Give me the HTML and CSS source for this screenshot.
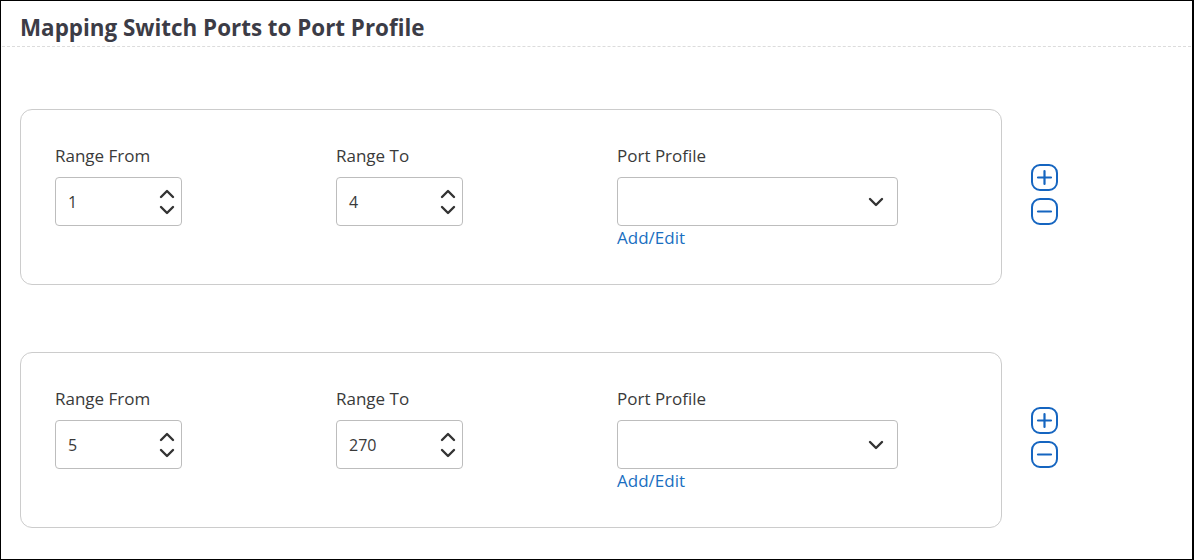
FILE: index.html
```html
<!DOCTYPE html>
<html>
<head>
<meta charset="utf-8">
<link rel="stylesheet" href="styles.css">
</head>
<body>
<div class="frame">
  <div class="header"><h1 class="title">Mapping Switch Ports to Port Profile</h1></div>
  <div class="rows">
    <div class="row">
      <div class="card">
        <div class="field">
          <div class="label">Range From</div>
          <div class="num"><span class="val">1</span>
            <svg class="spin" width="16" height="30" viewBox="0 0 16 30"><path d="M2 10 L8 4 L14 10" /><path d="M2 20 L8 26 L14 20" /></svg>
          </div>
        </div>
        <div class="field">
          <div class="label">Range To</div>
          <div class="num"><span class="val">4</span>
            <svg class="spin" width="16" height="30" viewBox="0 0 16 30"><path d="M2 10 L8 4 L14 10" /><path d="M2 20 L8 26 L14 20" /></svg>
          </div>
        </div>
        <div class="field">
          <div class="label">Port Profile</div>
          <div class="select">
            <svg class="chev" width="16" height="10" viewBox="0 0 16 10"><path d="M2 2 L8 8 L14 2" /></svg>
          </div>
          <a class="link">Add/Edit</a>
        </div>
      </div>
      <div class="actions">
        <svg class="btn" width="27" height="27" viewBox="0 0 27 27"><rect x="1" y="1" width="25" height="25" rx="8"/><path d="M13.5 7 V20 M7 13.5 H20"/></svg>
        <svg class="btn" width="27" height="27" viewBox="0 0 27 27"><rect x="1" y="1" width="25" height="25" rx="8"/><path d="M7 13.5 H20"/></svg>
      </div>
    </div>
    <div class="row">
      <div class="card">
        <div class="field">
          <div class="label">Range From</div>
          <div class="num"><span class="val">5</span>
            <svg class="spin" width="16" height="30" viewBox="0 0 16 30"><path d="M2 10 L8 4 L14 10" /><path d="M2 20 L8 26 L14 20" /></svg>
          </div>
        </div>
        <div class="field">
          <div class="label">Range To</div>
          <div class="num"><span class="val">270</span>
            <svg class="spin" width="16" height="30" viewBox="0 0 16 30"><path d="M2 10 L8 4 L14 10" /><path d="M2 20 L8 26 L14 20" /></svg>
          </div>
        </div>
        <div class="field">
          <div class="label">Port Profile</div>
          <div class="select">
            <svg class="chev" width="16" height="10" viewBox="0 0 16 10"><path d="M2 2 L8 8 L14 2" /></svg>
          </div>
          <a class="link">Add/Edit</a>
        </div>
      </div>
      <div class="actions">
        <svg class="btn" width="27" height="27" viewBox="0 0 27 27"><rect x="1" y="1" width="25" height="25" rx="8"/><path d="M13.5 7 V20 M7 13.5 H20"/></svg>
        <svg class="btn" width="27" height="27" viewBox="0 0 27 27"><rect x="1" y="1" width="25" height="25" rx="8"/><path d="M7 13.5 H20"/></svg>
      </div>
    </div>
  </div>
</div>
</body>
</html>
```

FILE: styles.css
```css
* { box-sizing: border-box; }
html, body { margin: 0; padding: 0; background: #fff; }
body { font-family: "Open Sans", "Noto Sans", sans-serif; color: #333; }
.frame {
  width: 1194px;
  height: 560px;
  border: 1px solid #000;
  border-right-width: 2px;
  overflow: hidden;
}
.header {
  padding: 12px 0 0 18px;
  height: 46px;
  border-bottom: 1px dashed #dcdcdc;
  margin: 0 1px;
}
.title {
  margin: 0;
  font-size: 22.4px;
  line-height: 30px;
  font-weight: 700;
  color: #3c3c46;
}
.rows {
  padding: 62px 0 0 19px;
  display: flex;
  flex-direction: column;
  gap: 67px;
}
.row {
  display: flex;
  align-items: center;
  gap: 30px;
}
.card {
  width: 982px;
  height: 176px;
  border: 1px solid #cccccc;
  border-radius: 12px;
  padding: 35px 0 0 34px;
  display: flex;
}
.field { width: 281px; display: flex; flex-direction: column; align-items: flex-start; }
.label {
  font-size: 17px;
  line-height: 22px;
  color: #3a3a3a;
  margin-bottom: 10px;
}
.num {
  width: 127px;
  height: 49px;
  border: 1px solid #bdbdbd;
  border-radius: 4px;
  display: flex;
  align-items: center;
  justify-content: space-between;
  padding: 0 6px 0 12px;
}
.val { font-size: 16px; color: #3a3a3a; }
.spin path, .chev path { fill: none; stroke: #333; stroke-width: 2.4; stroke-linecap: round; stroke-linejoin: round; }
.select {
  width: 281px;
  height: 49px;
  border: 1px solid #bdbdbd;
  border-radius: 4px;
  display: flex;
  align-items: center;
  justify-content: flex-end;
  padding-right: 13px;
}
.link {
  font-size: 17px;
  line-height: 22px;
  color: #1a6fc1;
  margin-top: 1px;
}
.actions {
  display: flex;
  flex-direction: column;
  gap: 7px;
  margin-top: -6px;
  margin-left: -1px;
}
.btn { display: block; }
.btn rect { fill: none; stroke: #1565c0; stroke-width: 2; }
.btn path { fill: none; stroke: #1565c0; stroke-width: 2.2; stroke-linecap: round; }
```
